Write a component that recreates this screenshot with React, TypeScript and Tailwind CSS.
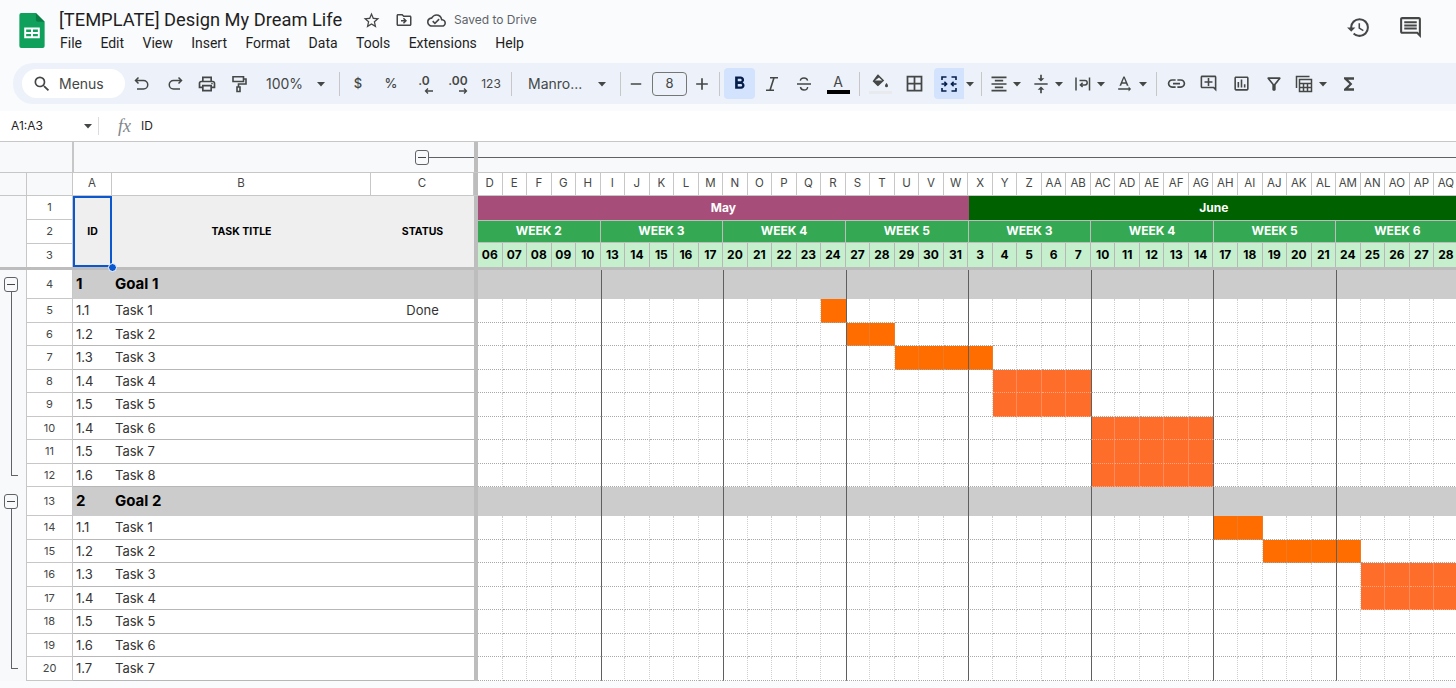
import type { ReactNode } from 'react';
import {
  MdAdd,
  MdBorderAll,
  MdFormatAlignCenter,
  MdFormatBold,
  MdFunctions,
  MdHistory,
  MdInsertLink,
  MdOutlineAddComment,
  MdOutlineAssessment,
  MdOutlineCloudDone,
  MdOutlineComment,
  MdOutlineDriveFileMove,
  MdOutlineFilterAlt,
  MdOutlinePrint,
  MdRemove,
  MdSearch,
  MdStarBorder,
  MdTextRotationNone,
  MdVerticalAlignCenter,
} from 'react-icons/md';

const COLS = 'D E F G H I J K L M N O P Q R S T U V W X Y Z AA AB AC AD AE AF AG AH AI AJ AK AL AM AN AO AP AQ'.split(' ');
const DAYS = '06 07 08 09 10 13 14 15 16 17 20 21 22 23 24 27 28 29 30 31 3 4 5 6 7 10 11 12 13 14 17 18 19 20 21 24 25 26 27 28'.split(' ');
const WEEKS = ['WEEK 2', 'WEEK 3', 'WEEK 4', 'WEEK 5', 'WEEK 3', 'WEEK 4', 'WEEK 5', 'WEEK 6'];

type Row = { n: number; id: string; title: string; status?: string; goal?: boolean; from?: number; to?: number; soft?: boolean };

const ROWS: Row[] = [
  { n: 4, id: '1', title: 'Goal 1', goal: true },
  { n: 5, id: '1.1', title: 'Task 1', status: 'Done', from: 14, to: 14 },
  { n: 6, id: '1.2', title: 'Task 2', from: 15, to: 16 },
  { n: 7, id: '1.3', title: 'Task 3', from: 17, to: 20 },
  { n: 8, id: '1.4', title: 'Task 4', from: 21, to: 24, soft: true },
  { n: 9, id: '1.5', title: 'Task 5', from: 21, to: 24, soft: true },
  { n: 10, id: '1.4', title: 'Task 6', from: 25, to: 29, soft: true },
  { n: 11, id: '1.5', title: 'Task 7', from: 25, to: 29, soft: true },
  { n: 12, id: '1.6', title: 'Task 8', from: 25, to: 29, soft: true },
  { n: 13, id: '2', title: 'Goal 2', goal: true },
  { n: 14, id: '1.1', title: 'Task 1', from: 30, to: 31 },
  { n: 15, id: '1.2', title: 'Task 2', from: 32, to: 35 },
  { n: 16, id: '1.3', title: 'Task 3', from: 36, to: 39, soft: true },
  { n: 17, id: '1.4', title: 'Task 4', from: 36, to: 39, soft: true },
  { n: 18, id: '1.5', title: 'Task 5' },
  { n: 19, id: '1.6', title: 'Task 6' },
  { n: 20, id: '1.7', title: 'Task 7' },
];

const Caret = () => (
  <svg width="12" height="12" viewBox="0 0 12 12" className="shrink-0 text-[#444746]">
    <path d="M2 4h8L6 8.4z" fill="currentColor" />
  </svg>
);

const Sep = ({ className }: { className: string }) => <div className={`h-[24px] w-px shrink-0 bg-[#c7c7c7] ${className}`} />;

const Btn = ({ className, children }: { className: string; children: ReactNode }) => (
  <div className={`flex h-[30px] shrink-0 items-center justify-center text-[#444746] ${className}`}>{children}</div>
);

const CaretBtn = ({ className = '' }: { className?: string }) => (
  <Btn className={`w-[12px] ${className}`}>
    <Caret />
  </Btn>
);

// line icons that the icon packs only have in a heavier cut
const Line = ({ d, size = 20, color = '#444746', w = 1.5 }: { d: string; size?: number; color?: string; w?: number }) => (
  <svg width={size} height={size} viewBox="0 0 20 20" fill="none" stroke={color} strokeWidth={w}>
    <path d={d} />
  </svg>
);

const SheetsLogo = () => (
  <svg width="26" height="35" viewBox="0 0 26 36" className="shrink-0">
    <path d="M2 0h15l9 9v25a2 2 0 0 1-2 2H2a2 2 0 0 1-2-2V2a2 2 0 0 1 2-2z" fill="#0fa15b" />
    <path d="M17 0l9 9h-7a2 2 0 0 1-2-2z" fill="#0a7d45" />
    <path d="M5 15h16v11H5z M7 17v2.5h5V17z M14 17v2.5h5V17z M7 21.5V24h5v-2.5z M14 21.5V24h5v-2.5z" fill="#fff" fillRule="evenodd" />
  </svg>
);

const FillIcon = () => (
  <svg width="20" height="16" viewBox="0 0 20 16">
    <path d="M7 1.2l1-1 1.2 1.2 5 5-5.6 5.4a1 1 0 0 1-1.4 0L2.6 7.2z" fill="#444746" />
    <path d="M5 6.6h7.2L9 3.4z" fill="#edf2fa" />
    <path d="M16.5 9c.9 1.2 1.5 2 1.5 2.8a1.5 1.5 0 0 1-3 0c0-.8.6-1.6 1.5-2.8z" fill="#444746" />
  </svg>
);

const DecimalIcon = ({ label, dir }: { label: string; dir: 'left' | 'right' }) => (
  <div className="relative flex h-[22px] w-[26px] items-start justify-center text-[12px] font-semibold leading-[16px] text-[#444746]">
    {label}
    <svg width="10" height="8" viewBox="0 0 10 8" className="absolute bottom-0 right-[3px]" fill="none" stroke="#444746" strokeWidth="1.3">
      {dir === 'left' ? <path d="M9 4H1.5M4 1.5L1.5 4 4 6.5" /> : <path d="M1 4h7.5M6 1.5L8.5 4 6 6.5" />}
    </svg>
  </div>
);

const OutlineBox = () => (
  <div className="flex h-[15px] w-[14px] items-center justify-center rounded-[3px] border border-[#5f6368] bg-[#f8f9fa]">
    <div className="h-px w-[8px] bg-[#444746]" />
  </div>
);

const Toolbar = () => (
  <div className="ml-[13px] flex h-[41px] items-center rounded-l-[20px] bg-[#edf2fa] pl-[9px]">
    <div className="flex h-[29px] w-[103px] shrink-0 items-center rounded-full bg-white pl-[10px] text-[14px] text-[#444746]">
      <MdSearch size={20} />
      <span className="ml-[7px]">Menus</span>
    </div>
    <Btn className="w-[33px]"><Line d="M6.5 3.5L3.5 6.5l3 3M3.5 6.5h8a3.8 3.8 0 0 1 0 8.5H5" /></Btn>
    <Btn className="w-[33px]"><Line d="M13.5 3.5l3 3-3 3M16.5 6.5h-8a3.8 3.8 0 0 0 0 8.5H15" /></Btn>
    <Btn className="w-[32px]"><MdOutlinePrint size={20} /></Btn>
    <Btn className="w-[32px]"><Line d="M4 2.8h10.5v4.7H4zM14.5 5H17v5H9.5v3M8 13h3v4.5H8z" w={1.6} /></Btn>
    <div className="flex w-[76px] shrink-0 items-center justify-between pl-[11px] pr-[4px] text-[14px] text-[#444746]">
      <span>100%</span>
      <Caret />
    </div>
    <Sep className="ml-[8px]" />
    <Btn className="ml-[2px] w-[32px] text-[13px] font-medium">$</Btn>
    <Btn className="ml-px w-[32px] text-[13px] font-medium">%</Btn>
    <Btn className="ml-px w-[32px]"><DecimalIcon label=".0" dir="left" /></Btn>
    <Btn className="ml-[2px] w-[32px]"><DecimalIcon label=".00" dir="right" /></Btn>
    <Btn className="ml-px w-[32px] text-[12px]">123</Btn>
    <Sep className="ml-[4px]" />
    <div className="ml-[16px] flex w-[80px] shrink-0 items-center justify-between text-[14px] text-[#444746]">
      <span>Manro...</span>
      <Caret />
    </div>
    <Sep className="ml-[12px]" />
    <Btn className="ml-[3px] w-[24px]"><MdRemove size={18} /></Btn>
    <div className="ml-[4px] flex h-[24px] w-[35px] shrink-0 items-center justify-center rounded-[4px] border border-[#747775] text-[13px] text-[#444746]">8</div>
    <Btn className="ml-[3px] w-[24px]"><MdAdd size={20} /></Btn>
    <Sep className="ml-[5px]" />
    <Btn className="ml-[4px] h-[31px] w-[31px] rounded-[4px] bg-[#d3e3fd] !text-[#041e49]"><MdFormatBold size={21} /></Btn>
    <Btn className="ml-px w-[32px]"><Line d="M8 3.7h8M4 16.3h8M12 3.7L8 16.3" w={1.6} /></Btn>
    <Btn className="w-[32px]"><Line d="M3 10h14M13.6 6.6C13.2 4.8 11.8 4 10 4 8 4 6.4 5 6.4 6.8M6.4 13c.4 2 1.8 3 3.6 3 2 0 3.6-1 3.6-3" w={1.4} /></Btn>
    <div className="ml-[2px] flex h-[30px] w-[32px] shrink-0 flex-col items-center justify-center">
      <span className="text-[14px] leading-[16px] text-[#444746]">A</span>
      <div className="h-[4px] w-[23px] bg-black" />
    </div>
    <Sep className="ml-[5px]" />
    <div className="ml-[4px] flex h-[30px] w-[32px] shrink-0 flex-col items-center justify-center gap-[1px]">
      <FillIcon />
      <div className="h-[3px] w-[23px] bg-[#e8eaed]" />
    </div>
    <Btn className="ml-[2px] w-[32px]"><MdBorderAll size={21} /></Btn>
    <Btn className="ml-[4px] h-[31px] w-[30px] rounded-l-[4px] bg-[#d3e3fd]">
      <Line color="#041e49" w={1.6} d="M3 6V3h4.5M12.5 3H17v3M3 14v3h4.5M12.5 17H17v-3M2.5 10h5M5.4 7.8L7.6 10l-2.2 2.2M17.5 10h-5M14.6 7.8L12.4 10l2.2 2.2" />
    </Btn>
    <CaretBtn />
    <Sep className="ml-[5px]" />
    <Btn className="ml-[5px] w-[24px]"><MdFormatAlignCenter size={20} /></Btn>
    <CaretBtn />
    <Btn className="ml-[6px] w-[24px]"><MdVerticalAlignCenter size={20} /></Btn>
    <CaretBtn />
    <Btn className="ml-[6px] w-[24px]"><Line d="M3 3.5v13M16.5 3.5v13M6.5 6.5h5.5a2.2 2.2 0 0 1 0 4.4H7.5M9.6 8.8l-2.2 2.1 2.2 2.1" /></Btn>
    <CaretBtn />
    <Btn className="ml-[5px] w-[24px]"><MdTextRotationNone size={20} /></Btn>
    <CaretBtn className="ml-px" />
    <Sep className="ml-[7px]" />
    <Btn className="ml-[7px] w-[24px]"><MdInsertLink size={21} /></Btn>
    <Btn className="ml-[8px] w-[24px]"><MdOutlineAddComment size={19} /></Btn>
    <Btn className="ml-[9px] w-[24px]"><MdOutlineAssessment size={19} /></Btn>
    <Btn className="ml-[9px] w-[24px]"><MdOutlineFilterAlt size={20} /></Btn>
    <Btn className="ml-[6px] w-[24px]"><Line d="M2.5 14V2.5h13M5.5 5.5h12v12h-12zM5.5 9.5h12M5.5 13.5h12M9.5 9.5v8M13.5 9.5v8" /></Btn>
    <CaretBtn className="ml-px" />
    <Btn className="ml-[8px] w-[24px]"><MdFunctions size={20} /></Btn>
  </div>
);

const Header = () => (
  <div className="flex h-[63px] items-start pl-[19px] pt-[13px]">
    <SheetsLogo />
    <div className="ml-[14px] -mt-[5px] font-['Roboto',sans-serif]">
      <div className="flex h-[24px] items-center text-[#1f1f1f]">
        <span className="w-[296px] whitespace-nowrap text-[18.3px]">[TEMPLATE] Design My Dream Life</span>
        <div className="flex w-[32px] justify-center text-[#444746]"><MdStarBorder size={19} /></div>
        <div className="flex w-[33px] justify-center text-[#444746]"><MdOutlineDriveFileMove size={18} /></div>
        <div className="flex w-[33px] justify-center text-[#444746]"><MdOutlineCloudDone size={19} /></div>
        <span className="ml-px font-['Inter',sans-serif] text-[12px] text-[#5f6368]">Saved to Drive</span>
      </div>
      <div className="ml-px mt-px flex gap-[18.4px] text-[14px] leading-[20px] text-[#1f1f1f]">
        {['File', 'Edit', 'View', 'Insert', 'Format', 'Data', 'Tools', 'Extensions', 'Help'].map((m) => (
          <span key={m}>{m}</span>
        ))}
      </div>
    </div>
    <div className="ml-auto mr-[33px] mt-[2px] flex items-center gap-[27px] text-[#444746]">
      <MdHistory size={25} />
      <MdOutlineComment size={25} />
    </div>
  </div>
);

const FormulaBar = () => (
  <div className="mt-[7px] flex h-[31px] items-center border-b border-[#c7c7c7] bg-white pl-[11px] text-[12px] text-[#1f1f1f]">
    <span className="w-[71px]">A1:A3</span>
    <Caret />
    <div className="ml-[4px] h-[18px] w-px bg-[#dadce0]" />
    <span className="ml-[19px] font-['Liberation_Serif',serif] text-[18px] italic text-[#80868b]">fx</span>
    <span className="ml-[10px]">ID</span>
  </div>
);

const FreezeV = () => <div className="w-[4px] shrink-0 self-stretch bg-[#bdbdbd]" />;

const TimelineCell = ({ i, row }: { i: number; row: Row }) => {
  const filled = row.from !== undefined && i >= row.from && i <= (row.to as number);
  const bg = filled ? (row.soft ? 'bg-[#ff6d2a]' : 'bg-[#ff6d01]') : row.goal ? 'bg-[#cccccc]' : 'bg-white';
  let right = 'border-r border-r-[#cfcfcf] [border-right-style:dotted]';
  if (row.goal) right = 'border-r border-r-transparent';
  else if (filled) right = row.soft ? 'border-r border-r-[#ff8a5c]' : 'border-r border-r-[#f07a20]';
  if (i % 5 === 4) right = 'border-r-0';
  // the week rule sits on the left edge of the first day of each week
  const left = i % 5 === 0 && i > 0 ? 'border-l border-l-[#5f5f5f]' : '';
  const bottom = filled && row.soft ? 'border-b-[#ffa580]' : 'border-b-[#a8a8a8]';
  return (
    <div className={`h-full w-[24.53px] shrink-0 ${right} ${left} ${bg} ${row.goal ? '' : `border-b ${bottom} [border-bottom-style:dotted]`}`} />
  );
};

const DataRow = ({ row }: { row: Row }) => (
  <div className={`flex ${row.goal ? 'h-[29px]' : 'h-[23.5px]'}`}>
    <div className="w-[26px] shrink-0" />
    <div className="flex w-[47px] shrink-0 items-center justify-center border-x border-b border-[#c7c7c7] bg-white text-[11px] text-[#444746]">
      {row.n}
    </div>
    <div
      className={`flex w-[401px] shrink-0 items-center border-b pt-px ${
        row.goal ? 'border-[#cccccc] bg-[#cccccc] text-[15px] font-bold text-black' : 'border-[#b7b7b7] bg-white text-[13px] text-[#333333]'
      }`}
    >
      <span className="w-[39px] shrink-0 pl-[3px]">{row.id}</span>
      <span className="w-[259px] shrink-0 pl-[3px]">{row.title}</span>
      <span className="flex-1 text-center">{row.status}</span>
    </div>
    <FreezeV />
    <div className="flex">
      {COLS.map((c, i) => (
        <TimelineCell key={c} i={i} row={row} />
      ))}
    </div>
  </div>
);

const Grid = () => (
  <div className="relative bg-[#f8f9fa]">
    {/* column group strip */}
    <div className="flex h-[30px]">
      <div className="w-[74px] shrink-0 border-r-2 border-[#c7c7c7]" />
      <div className="flex w-[400px] shrink-0 items-center pl-[341px]">
        <OutlineBox />
        <div className="h-px flex-1 bg-[#5f6368]" />
      </div>
      <FreezeV />
      <div className="flex flex-1 items-center">
        <div className="h-px w-full bg-[#5f6368]" />
      </div>
    </div>
    {/* column letters */}
    <div className="flex h-[24px] border-y border-[#c7c7c7]">
      <div className="w-[26px] shrink-0" />
      <div className="w-[47px] shrink-0 border-x border-[#c7c7c7]" />
      {[
        ['A', 'w-[39px]'],
        ['B', 'w-[259px]'],
        ['C', 'w-[103px]'],
      ].map(([c, w]) => (
        <div key={c} className={`flex ${w} shrink-0 items-center justify-center border-r border-[#c7c7c7] bg-white text-[11.5px] text-[#444746]`}>
          {c}
        </div>
      ))}
      <FreezeV />
      {COLS.map((c) => (
        <div key={c} className="flex w-[24.53px] shrink-0 items-center justify-center border-r border-[#c7c7c7] bg-white text-[11.5px] text-[#444746]">
          {c}
        </div>
      ))}
    </div>
    {/* frozen header rows */}
    <div className="flex h-[71px]">
      <div className="w-[26px] shrink-0" />
      <div className="flex w-[47px] shrink-0 flex-col border-x border-[#c7c7c7] bg-white text-[11px] text-[#444746]">
        {[1, 2, 3].map((n) => (
          <div key={n} className="flex flex-1 items-center justify-center border-b border-[#c7c7c7] last:border-b-0">
            {n}
          </div>
        ))}
      </div>
      <div className="flex w-[401px] shrink-0 items-center bg-[#efefef] text-center text-[10.5px] font-bold text-black">
        <span className="w-[39px]">ID</span>
        <span className="w-[259px]">TASK TITLE</span>
        <span className="flex-1">STATUS</span>
      </div>
      <FreezeV />
      <div className="flex flex-col text-[12px] font-bold">
        <div className="flex h-[23.5px] text-white">
          <div className="flex w-[490.6px] items-center justify-center bg-[#a64d79]">May</div>
          <div className="flex w-[490.6px] items-center justify-center bg-[#006100]">June</div>
        </div>
        <div className="flex h-[23.5px] text-white">
          {WEEKS.map((w, i) => (
            <div key={i} className="flex w-[122.65px] items-center justify-center border-y border-r border-[#bdbdbd] bg-[#34a853]">
              {w}
            </div>
          ))}
        </div>
        <div className="flex h-[24px] text-black">
          {DAYS.map((d, i) => (
            <div key={i} className="flex w-[24.53px] shrink-0 items-center justify-center border-r border-[#b7b7b7] bg-[#c6efce]">
              {d}
            </div>
          ))}
        </div>
      </div>
    </div>
    <div className="h-[3px] bg-[#bdbdbd]" />
    {ROWS.map((r) => (
      <DataRow key={r.n} row={r} />
    ))}

    {/* selection of A1:A3 */}
    <div className="absolute left-[73px] top-[54px] h-[71px] w-[39px] border-2 border-[#0b57d0]" />
    <div className="absolute left-[108px] top-[121px] h-[9px] w-[9px] rounded-full border border-white bg-[#0b57d0]" />

    {/* row groups in the gutter */}
    <div className="absolute left-[4px] top-[135px]"><OutlineBox /></div>
    <div className="absolute left-[11px] top-[150px] h-[184px] w-[7px] rounded-bl-[1px] border-b border-l border-[#5f6368]" />
    <div className="absolute left-[4px] top-[352px]"><OutlineBox /></div>
    <div className="absolute left-[11px] top-[367px] h-[160px] w-[7px] rounded-bl-[1px] border-b border-l border-[#5f6368]" />
  </div>
);

export default function App() {
  return (
    <div className="h-[688px] w-[1456px] overflow-hidden bg-[#f9fbfd] font-['Inter',sans-serif]">
      <Header />
      <Toolbar />
      <FormulaBar />
      <Grid />
    </div>
  );
}
